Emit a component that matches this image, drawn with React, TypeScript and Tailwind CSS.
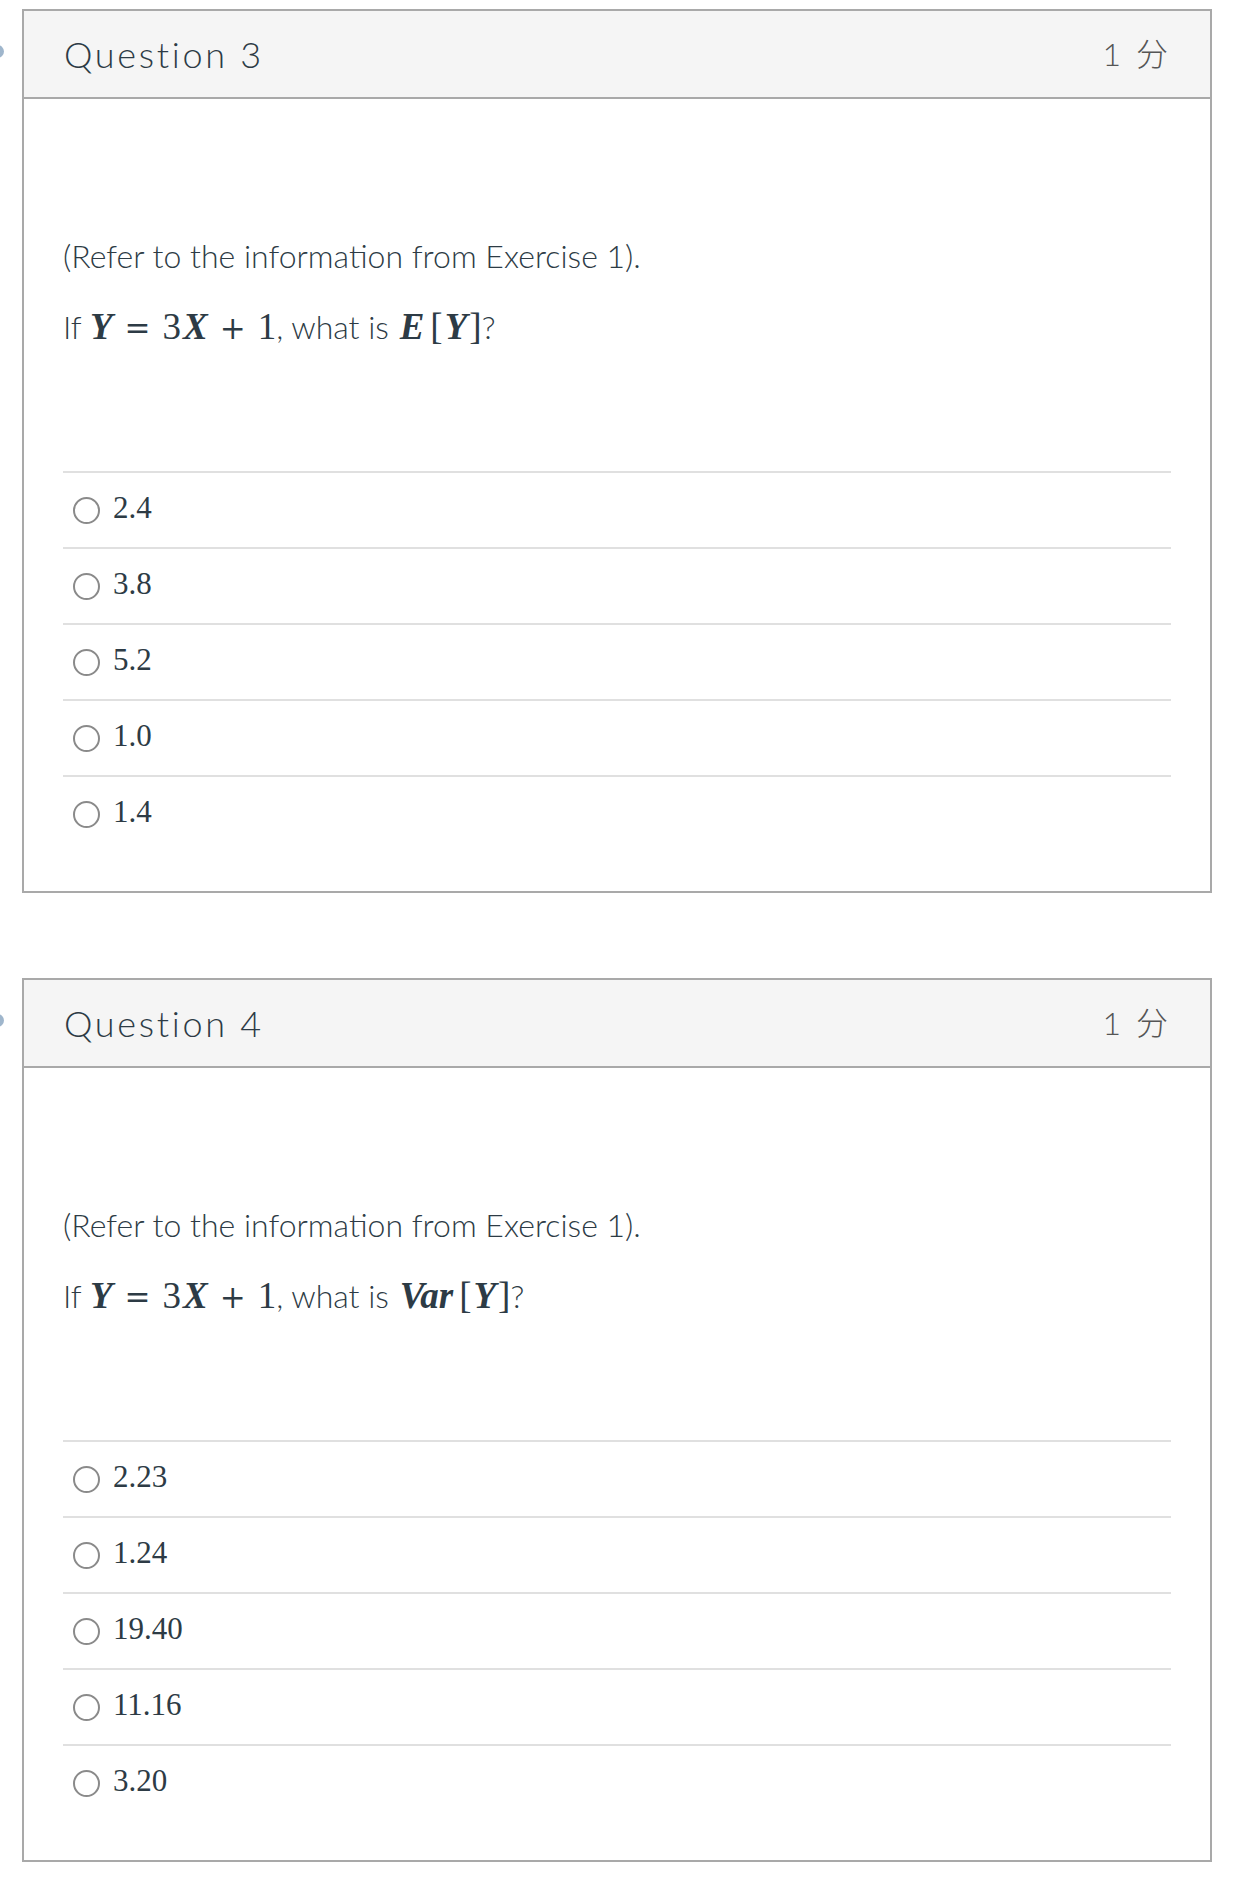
import React from 'react';

interface Question {
  id: number;
  points: string;
  expr: React.ReactNode;
  answers: string[];
}

const serif = "font-['Liberation_Serif','DejaVu_Serif',serif]";
const light = "font-['Lato_Light','Lato','Noto_Sans_CJK_SC',sans-serif] font-light";

function M({ children, bold }: { children: React.ReactNode; bold?: boolean }) {
  return <span className={`${serif} italic ${bold ? 'font-bold' : ''}`}>{children}</span>;
}

function Op({ children }: { children: React.ReactNode }) {
  return <span className="mx-[12px] font-['DejaVu_Serif',serif] text-[31px] font-normal">{children}</span>;
}

function Formula({ target }: { target: React.ReactNode }) {
  return (
    <p className="h-[45px] leading-[45px]">
      If{' '}
      <span className={`${serif} text-[37px] font-normal leading-none`}>
        <M bold>Y</M>
        <Op>=</Op>3<span className="ml-[2px]"><M bold>X</M></span>
        <Op>+</Op>1
      </span>
      , what is{' '}
      <span className={`${serif} ml-[2px] text-[37px] font-normal leading-none`}>
        {target}
        <span className="ml-[6px]">[</span>
        <span className="mx-[2px]"><M bold>Y</M></span>]
      </span>
      ?
    </p>
  );
}

const questions: Question[] = [
  {
    id: 3,
    points: '1 分',
    expr: <M bold>E</M>,
    answers: ['2.4', '3.8', '5.2', '1.0', '1.4'],
  },
  {
    id: 4,
    points: '1 分',
    expr: <M bold>Var</M>,
    answers: ['2.23', '1.24', '19.40', '11.16', '3.20'],
  },
];

function QuestionCard({ q }: { q: Question }) {
  return (
    <div className="relative">
      {/* little flag marker poking in from the left edge */}
      <div className="absolute left-[-9px] top-[36px] h-[13px] w-[13px] rounded-full bg-[#9fb6cc]" />
      <div className="ml-[22px] w-[1190px] border-2 border-[#a9a9a9] bg-white">
        <div className="flex h-[88px] items-center justify-between border-b-2 border-[#a9a9a9] bg-[#f5f5f5] px-[40px]">
          <h2 className={`${light} text-[36px] tracking-[2.7px] text-[#2d3b45]`}>Question {q.id}</h2>
          <span className={`${light} pr-[2px] text-[32px] text-[#555]`}>
            1<span className="ml-[15px]">分</span>
          </span>
        </div>

        <div className={`${light} px-[39px] pt-[134px] pb-[40px] text-[32px] text-[#2d3b45]`}>
          <p className="leading-[45px]">(Refer to the information from Exercise 1).</p>
          <div className="mt-[26px]">
            <Formula target={q.expr} />
          </div>

          <div className="mt-[122px]">
            {q.answers.map((a) => (
              <div key={a} className="flex h-[76px] items-center border-t-2 border-[#e0e0e0] pl-[10px]">
                <span className="h-[27px] w-[27px] shrink-0 rounded-full border-[2.5px] border-[#8a8a8a] bg-white" />
                <span className={`ml-[13px] ${serif} -mt-[6px] text-[31px] font-normal leading-none text-[#2d3b45]`}>
                  {a}
                </span>
              </div>
            ))}
          </div>
        </div>
      </div>
    </div>
  );
}

export default function App() {
  return (
    <div className="min-h-screen bg-white pt-[9px]">
      <div className="flex flex-col gap-[85px]">
        {questions.map((q) => (
          <QuestionCard key={q.id} q={q} />
        ))}
      </div>
    </div>
  );
}
